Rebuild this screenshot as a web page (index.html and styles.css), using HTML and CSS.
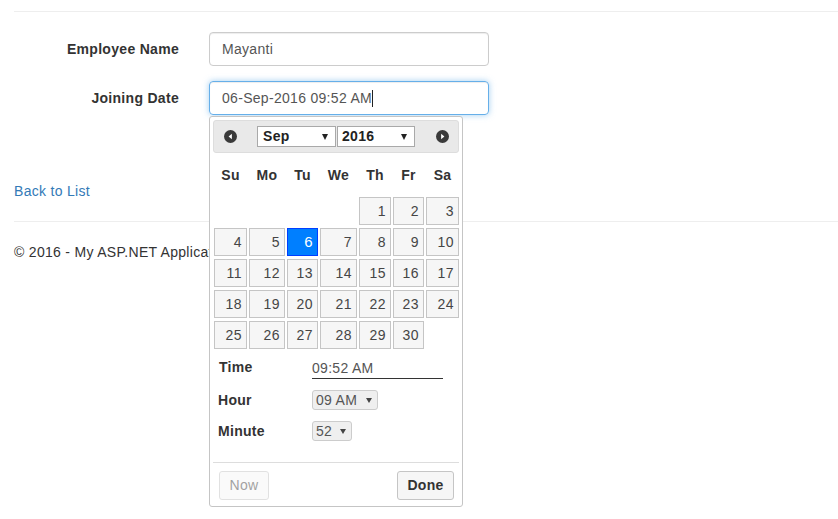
FILE: index.html
```html
<!DOCTYPE html>
<html>
<head>
<meta charset="utf-8">
<title>Edit Employee</title>
<link rel="stylesheet" href="styles.css">
</head>
<body>
<div class="container">
  <hr class="rule">
  <div class="form">
    <div class="form-row">
      <div class="label">Employee Name</div>
      <div class="field">
        <div class="input">Mayanti</div>
      </div>
    </div>
    <div class="form-row">
      <div class="label">Joining Date</div>
      <div class="field">
        <div class="input focus">06-Sep-2016 09:52 AM<span class="caret"></span></div>
        <div class="picker">
          <div class="dp-head">
            <svg class="dp-nav prev" width="13" height="13" viewBox="0 0 13 13"><circle cx="6.5" cy="6.5" r="6.5" fill="#3a3a3a"/><path d="M7.9 3.7 L4.6 6.5 L7.9 9.3 Z" fill="#fff"/></svg>
            <div class="dp-select month"><span>Sep</span><i class="tri"></i></div>
            <div class="dp-select year"><span>2016</span><i class="tri"></i></div>
            <svg class="dp-nav next" width="13" height="13" viewBox="0 0 13 13"><circle cx="6.5" cy="6.5" r="6.5" fill="#3a3a3a"/><path d="M5.1 3.7 L8.4 6.5 L5.1 9.3 Z" fill="#fff"/></svg>
          </div>
          <div class="dp-grid dp-names">
            <div>Su</div><div>Mo</div><div>Tu</div><div>We</div><div>Th</div><div>Fr</div><div>Sa</div>
          </div>
          <div class="dp-grid dp-days">
            <div class="empty"></div><div class="empty"></div><div class="empty"></div><div class="empty"></div>
            <div class="day">1</div><div class="day">2</div><div class="day">3</div>
            <div class="day">4</div><div class="day">5</div><div class="day active">6</div><div class="day">7</div><div class="day">8</div><div class="day">9</div><div class="day">10</div>
            <div class="day">11</div><div class="day">12</div><div class="day">13</div><div class="day">14</div><div class="day">15</div><div class="day">16</div><div class="day">17</div>
            <div class="day">18</div><div class="day">19</div><div class="day">20</div><div class="day">21</div><div class="day">22</div><div class="day">23</div><div class="day">24</div>
            <div class="day">25</div><div class="day">26</div><div class="day">27</div><div class="day">28</div><div class="day">29</div><div class="day">30</div><div class="empty"></div>
          </div>
          <div class="dp-time">
            <div class="t-row t-time"><div class="t-label">Time</div><div class="t-value">09:52 AM</div></div>
            <div class="t-row t-hour"><div class="t-label">Hour</div><div class="t-select hour"><span>09 AM</span><i class="tri small"></i></div></div>
            <div class="t-row t-minute"><div class="t-label">Minute</div><div class="t-select minute"><span>52</span><i class="tri small"></i></div></div>
          </div>
          <div class="dp-buttons">
            <div class="btn now">Now</div>
            <div class="btn done">Done</div>
          </div>
        </div>
      </div>
    </div>
  </div>
  <div class="back"><a href="#">Back to List</a></div>
  <hr class="rule footer-rule">
  <footer class="footer">© 2016 - My ASP.NET Application</footer>
</div>
</body>
</html>
```

FILE: styles.css
```css
html {
  height: 100%;
}

body {
  margin: 0;
  min-height: 519px;
  font-family: "Liberation Sans", Arial, sans-serif;
  font-size: 14px;
  line-height: 20px;
  letter-spacing: 0.3px;
  color: #333;
  background: #fff;
}

.container {
  padding: 11px 0 0 14px;
}

.rule {
  border: 0;
  border-top: 1px solid #eee;
  margin: 0;
}

.form {
  margin-top: 20px;
  display: flex;
  flex-direction: column;
  gap: 15px;
}

.form-row {
  display: grid;
  grid-template-columns: 165px 280px;
  column-gap: 30px;
  align-items: center;
}

.label {
  text-align: right;
  font-weight: bold;
  color: #333;
}

.field {
  position: relative;
}

.input {
  height: 34px;
  box-sizing: border-box;
  border: 1px solid #ccc;
  border-radius: 4px;
  padding: 6px 12px;
  color: #555;
  line-height: 20px;
  box-shadow: inset 0 1px 1px rgba(0, 0, 0, .075);
  white-space: nowrap;
}

.input.focus {
  border-color: #66afe9;
  box-shadow: inset 0 1px 1px rgba(0, 0, 0, .075), 0 0 6px rgba(102, 175, 233, .6);
}

.caret {
  display: inline-block;
  width: 0;
  height: 17px;
  border-left: 1px solid #222;
  vertical-align: -4px;
  margin-left: 0;
}

/* datepicker */
.picker {
  position: absolute;
  left: 0;
  top: 35px;
  width: 254px;
  box-sizing: border-box;
  border: 1px solid #c5c5c5;
  border-radius: 3px;
  padding: 3px;
  background: #fff;
  z-index: 10;
}

.dp-head {
  height: 33px;
  box-sizing: border-box;
  border: 1px solid #ddd;
  background: #e9e9e9;
  border-radius: 3px;
  display: flex;
  align-items: center;
}

.dp-nav.prev {
  margin-left: 10px;
}

.dp-nav.next {
  margin-left: auto;
  margin-right: 9px;
}

.dp-select {
  height: 21px;
  box-sizing: border-box;
  border: 1px solid #a9a9a9;
  background: #fff;
  font-weight: bold;
  color: #222;
  display: flex;
  align-items: center;
  justify-content: space-between;
  line-height: 19px;
}

.dp-select.month {
  width: 79px;
  margin-left: 20px;
  padding: 0 7px 0 5px;
}

.dp-select.year {
  width: 78px;
  margin-left: 1px;
  padding: 0 7px 0 4px;
}

.tri {
  display: block;
  width: 0;
  height: 0;
  border-left: 3px solid transparent;
  border-right: 3px solid transparent;
  border-top: 6px solid #222;
}

.tri.small {
  border-left-width: 3px;
  border-right-width: 3px;
  border-top-width: 5px;
  border-top-color: #444;
}

.dp-grid {
  display: grid;
  grid-template-columns: 33px 36px 31px 37px 32px 31px 33px;
  column-gap: 2px;
  margin-left: 1px;
}

.dp-names {
  margin-top: 10px;
  height: 24px;
  line-height: 24px;
  font-weight: bold;
  text-align: center;
  color: #333;
}

.dp-days {
  margin-top: 10px;
  grid-auto-rows: 28px;
  row-gap: 3px;
}

.day {
  box-sizing: border-box;
  border: 1px solid #c5c5c5;
  background: #f6f6f6;
  color: #454545;
  text-align: right;
  padding-right: 4px;
  line-height: 26px;
  font-size: 14px;
  letter-spacing: 0.5px;
}

.day.active {
  background: #007fff;
  border-color: #003eff;
  color: #fff;
  font-size: 15px;
}

.dp-time {
  display: flex;
  flex-direction: column;
}

.t-row {
  display: flex;
  align-items: center;
  height: 24px;
}

.t-time {
  margin-top: 6px;
}

.t-hour {
  margin-top: 9px;
}

.t-minute {
  margin-top: 7px;
}

.t-label {
  width: 93px;
  padding-left: 6px;
  font-weight: bold;
  color: #333;
  flex: none;
}

.t-hour .t-label,
.t-minute .t-label {
  padding-left: 5px;
  width: 94px;
}

.t-value {
  width: 131px;
  height: 24px;
  box-sizing: border-box;
  border-bottom: 1px solid #333;
  padding-top: 3px;
  line-height: 20px;
  color: #555;
  flex: none;
}

.t-select {
  height: 20px;
  box-sizing: border-box;
  border: 1px solid #ccc;
  border-radius: 3px;
  background: #efefef;
  color: #555;
  display: flex;
  align-items: center;
  justify-content: space-between;
  padding: 0 5px 0 3px;
  line-height: 18px;
  flex: none;
}

.t-select.hour {
  width: 66px;
}

.t-select.minute {
  width: 40px;
}

.dp-buttons {
  margin-top: 19px;
  border-top: 1px solid #ddd;
  padding: 8px 5px 3px 6px;
  display: flex;
  justify-content: space-between;
}

.btn {
  height: 29px;
  box-sizing: border-box;
  border: 1px solid #c5c5c5;
  border-radius: 3px;
  background: #f6f6f6;
  color: #454545;
  text-align: center;
  line-height: 27px;
}

.btn.now {
  width: 50px;
  opacity: .5;
}

.btn.done {
  width: 57px;
  font-weight: bold;
  color: #333;
}

/* lower page */
.back {
  margin-top: 66px;
}

.back a {
  color: #337ab7;
  text-decoration: none;
}

.footer-rule {
  margin-top: 20px;
}

.footer {
  margin-top: 20px;
  line-height: 20px;
  color: #333;
}
```
